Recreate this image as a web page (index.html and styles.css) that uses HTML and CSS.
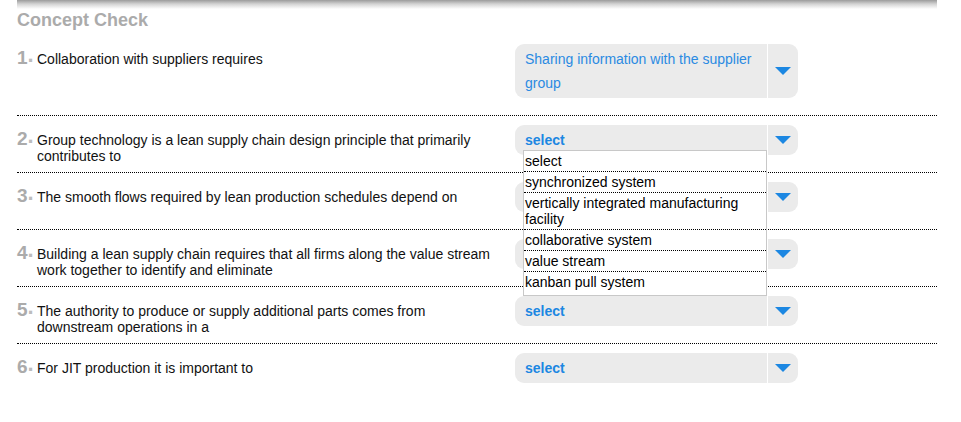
FILE: index.html
```html
<!DOCTYPE html>
<html lang="en">
  <head>
    <meta charset="UTF-8" />
    <meta name="viewport" content="width=device-width, initial-scale=1.0" />
    <title>Concept Check</title>
    <link rel="stylesheet" href="styles.css">
  </head>
  <body>
    <div class="quiz">
      <div class="topbar"></div>
      <h2 class="quiz-title">Concept Check</h2>

      <ol class="questions">
        <li class="question">
          <div class="prompt">
            <span class="num">1<span class="dot">.</span></span>
            <p class="qtext">Collaboration with suppliers requires</p>
          </div>
          <div class="answer">
            <div class="picker">
              <span class="picker-value">Sharing information with the supplier group</span>
              <span class="picker-btn">
                <svg width="16" height="8" viewBox="0 0 16 8"><path d="M0 0H16L8 8Z" fill="#1c87e2" /></svg>
              </span>
            </div>
          </div>
        </li>

        <li class="question">
          <div class="prompt">
            <span class="num">2<span class="dot">.</span></span>
            <p class="qtext">Group technology is a lean supply chain design principle that primarily contributes to</p>
          </div>
          <div class="answer">
            <div class="picker">
              <span class="picker-value empty">select</span>
              <span class="picker-btn">
                <svg width="16" height="8" viewBox="0 0 16 8"><path d="M0 0H16L8 8Z" fill="#1c87e2" /></svg>
              </span>
            </div>
            <!-- open option list -->
            <ul class="options">
              <li>select</li>
              <li>synchronized system</li>
              <li>vertically integrated manufacturing facility</li>
              <li>collaborative system</li>
              <li>value stream</li>
              <li>kanban pull system</li>
            </ul>
          </div>
        </li>

        <li class="question">
          <div class="prompt">
            <span class="num">3<span class="dot">.</span></span>
            <p class="qtext">The smooth flows required by lean production schedules depend on</p>
          </div>
          <div class="answer">
            <div class="picker">
              <span class="picker-value empty">select</span>
              <span class="picker-btn">
                <svg width="16" height="8" viewBox="0 0 16 8"><path d="M0 0H16L8 8Z" fill="#1c87e2" /></svg>
              </span>
            </div>
          </div>
        </li>

        <li class="question">
          <div class="prompt">
            <span class="num">4<span class="dot">.</span></span>
            <p class="qtext">Building a lean supply chain requires that all firms along the value stream work together to identify and eliminate</p>
          </div>
          <div class="answer">
            <div class="picker">
              <span class="picker-value empty">select</span>
              <span class="picker-btn">
                <svg width="16" height="8" viewBox="0 0 16 8"><path d="M0 0H16L8 8Z" fill="#1c87e2" /></svg>
              </span>
            </div>
          </div>
        </li>

        <li class="question">
          <div class="prompt">
            <span class="num">5<span class="dot">.</span></span>
            <p class="qtext">The authority to produce or supply additional parts comes from downstream operations in a</p>
          </div>
          <div class="answer">
            <div class="picker">
              <span class="picker-value empty">select</span>
              <span class="picker-btn">
                <svg width="16" height="8" viewBox="0 0 16 8"><path d="M0 0H16L8 8Z" fill="#1c87e2" /></svg>
              </span>
            </div>
          </div>
        </li>

        <li class="question">
          <div class="prompt">
            <span class="num">6<span class="dot">.</span></span>
            <p class="qtext">For JIT production it is important to</p>
          </div>
          <div class="answer">
            <div class="picker">
              <span class="picker-value empty">select</span>
              <span class="picker-btn">
                <svg width="16" height="8" viewBox="0 0 16 8"><path d="M0 0H16L8 8Z" fill="#1c87e2" /></svg>
              </span>
            </div>
          </div>
        </li>
      </ol>
    </div>
  </body>
</html>
```

FILE: styles.css
```css
body {
  margin: 0;
  background-color: white;
  font-family: "Liberation Sans", Arial, sans-serif;
  color: #111;
}
.quiz {
  width: 920px;
  margin-left: 17px;
}
.topbar {
  height: 9px;
  background: linear-gradient(#9c9c9c, #d4d4d4 45%, #fff);
}
.quiz-title {
  margin: 0 0 4px;
  font-size: 18px;
  line-height: 22px;
  font-weight: bold;
  color: #ababab;
}
.questions {
  list-style: none;
  margin: 0;
  padding: 0;
}
.question {
  display: flex;
  align-items: flex-start;
  border-bottom: 1px dotted #000;
}
.question:last-child {
  border-bottom: none;
}
.prompt {
  flex: 0 0 498px;
  box-sizing: border-box;
  display: flex;
  align-items: baseline;
  padding: 14px 18px 6px 0;
}
.num {
  flex: 0 0 20px;
  font-size: 19px;
  font-weight: bold;
  line-height: 11px;
  color: #ababab;
}
.dot {
  font-size: 22px;
  color: #bdbdbd;
  vertical-align: 2px;
}
.qtext {
  margin: 0;
  font-size: 14px;
  line-height: 16px;
}
.answer {
  position: relative;
  width: 283px;
  padding: 9px 0 17px;
}
.picker {
  display: flex;
  background-color: #ebebeb;
  border-radius: 9px;
}
.picker-value {
  flex: 1;
  padding: 3px 10px;
  font-size: 14px;
  line-height: 24px;
  color: #2a8ae2;
}
.picker-value.empty {
  font-weight: bold;
  color: #1c87e2;
}
.picker-btn {
  flex: 0 0 30px;
  display: flex;
  align-items: center;
  justify-content: center;
  border-left: 1px solid #fff;
}
.options {
  position: absolute;
  top: 34px;
  left: 8px;
  z-index: 2;
  width: 244px;
  box-sizing: border-box;
  margin: 0;
  padding: 0 0 3px;
  list-style: none;
  background-color: white;
  border: 1px solid #c8c8c8;
}
.options li {
  padding: 2px 1px;
  font-size: 14px;
  line-height: 16px;
  color: #000;
  border-bottom: 1px dotted #000;
}
.options li:last-child {
  border-bottom: none;
}
```
